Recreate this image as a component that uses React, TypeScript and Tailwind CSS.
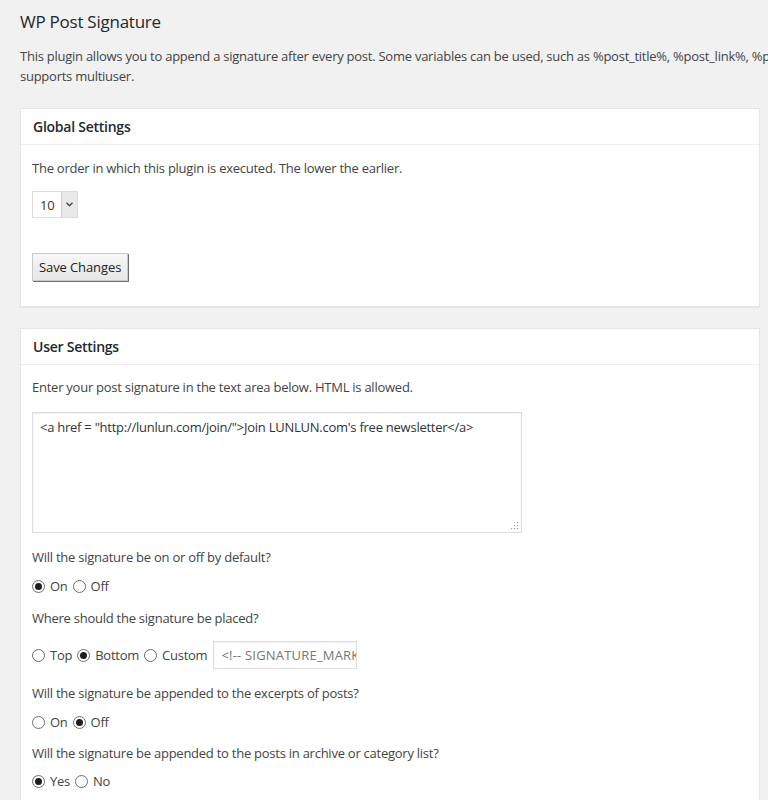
import React from "react";

function Radio({ checked, label }: { checked?: boolean; label: string }) {
  return (
    <span className="inline-flex items-center">
      <span className="w-[13px] h-[13px] rounded-full border border-[#6d6d6d] bg-white flex items-center justify-center">
        {checked && <span className="w-[7px] h-[7px] rounded-full bg-[#1e1e1e]" />}
      </span>
      <span className="ml-[5px] mr-[5px]">{label}</span>
    </span>
  );
}

function Box({ title, children }: { title: string; children: React.ReactNode }) {
  return (
    <div className="bg-white border border-[#e5e5e5] shadow-[0_1px_1px_rgba(0,0,0,0.04)]">
      <div className="h-[36px] border-b border-[#eeeeee] px-[12px] flex items-center text-[14px] font-semibold text-[#23282d]">
        {title}
      </div>
      <div className="px-[11px] pb-[12px]">{children}</div>
    </div>
  );
}

export default function App() {
  return (
    <div
      className="min-h-screen bg-[#f1f1f1] text-[#444] overflow-hidden pl-[20px] pr-[8px] text-[13px] leading-[20px] tracking-[-0.25px]"
      style={{ fontFamily: '"Open Sans", "Noto Sans", sans-serif' }}
    >
      <h1 className="pt-[9px] text-[17px] leading-[26px] text-[#23282d]">WP Post Signature</h1>
      <p className="mt-[11px] whitespace-nowrap">
        This plugin allows you to append a signature after every post. Some variables can be used, such as %post_title%, %post_link%, %post_date%, %author_name%. This plugin also
        <br />
        supports multiuser.
      </p>

      <div className="mt-[22px]">
        <Box title="Global Settings">
          <p className="mt-[13px]">The order in which this plugin is executed. The lower the earlier.</p>
          <div className="mt-[13px] flex">
            <div className="h-[27px] w-[46px] border border-[#dddddd] bg-white flex items-stretch">
              <span className="flex-1 flex items-center pl-[7px] text-[#333]">10</span>
              <span className="w-[16px] border-l border-[#cfcfcf] bg-[#e9e9e9] flex items-center justify-center">
                <svg width="7" height="5" viewBox="0 0 7 5">
                  <path d="M0.5 0.8 L3.5 3.8 L6.5 0.8" fill="none" stroke="#444" strokeWidth="1.3" />
                </svg>
              </span>
            </div>
          </div>
          <div className="mt-[35px] mb-[13px]">
            <button className="h-[28px] px-[6px] border border-[#c9c9c9] bg-gradient-to-b from-[#f7f7f7] to-[#e6e6e6] shadow-[1px_1px_0_#6f6f6f] text-[#222] tracking-[-0.1px]">
              Save Changes
            </button>
          </div>
        </Box>
      </div>

      <div className="mt-[21px]">
        <Box title="User Settings">
          <p className="mt-[12px]">Enter your post signature in the text area below. HTML is allowed.</p>
          <div className="mt-[15px] relative w-[490px] h-[121px] border border-[#dddddd] bg-white shadow-[inset_0_1px_2px_rgba(0,0,0,0.07)] pl-[7px] pt-[4px] text-[#333]">
            {'<a href = "http://lunlun.com/join/">Join LUNLUN.com\'s free newsletter</a>'}
            <svg className="absolute right-[2px] bottom-[2px]" width="8" height="8" viewBox="0 0 8 8">
              <rect x="6" y="0" width="1.2" height="1.2" fill="#999" />
              <rect x="3" y="3" width="1.2" height="1.2" fill="#999" />
              <rect x="6" y="3" width="1.2" height="1.2" fill="#999" />
              <rect x="0" y="6" width="1.2" height="1.2" fill="#999" />
              <rect x="3" y="6" width="1.2" height="1.2" fill="#999" />
              <rect x="6" y="6" width="1.2" height="1.2" fill="#999" />
            </svg>
          </div>

          <p className="mt-[14px]">Will the signature be on or off by default?</p>
          <div className="mt-[9px] flex items-center h-[20px]">
            <Radio checked label="On" />
            <Radio label="Off" />
          </div>

          <p className="mt-[12px]">Where should the signature be placed?</p>
          <div className="mt-[13px] flex items-center h-[28px]">
            <Radio label="Top" />
            <Radio checked label="Bottom" />
            <Radio label="Custom" />
            <div className="ml-[1px] h-[28px] w-[144px] border border-[#dddddd] bg-white overflow-hidden whitespace-nowrap flex items-center pl-[7px] text-[#777] tracking-[0.2px] shadow-[inset_0_1px_2px_rgba(0,0,0,0.07)]">
              {"<!-- SIGNATURE_MARKER -->"}
            </div>
          </div>

          <p className="mt-[14px]">Will the signature be appended to the excerpts of posts?</p>
          <div className="mt-[9px] flex items-center h-[20px]">
            <Radio label="On" />
            <Radio checked label="Off" />
          </div>

          <p className="mt-[11px]">Will the signature be appended to the posts in archive or category list?</p>
          <div className="mt-[8px] flex items-center h-[20px]">
            <Radio checked label="Yes" />
            <Radio label="No" />
          </div>
          <div className="h-[40px]" />
        </Box>
      </div>
    </div>
  );
}
